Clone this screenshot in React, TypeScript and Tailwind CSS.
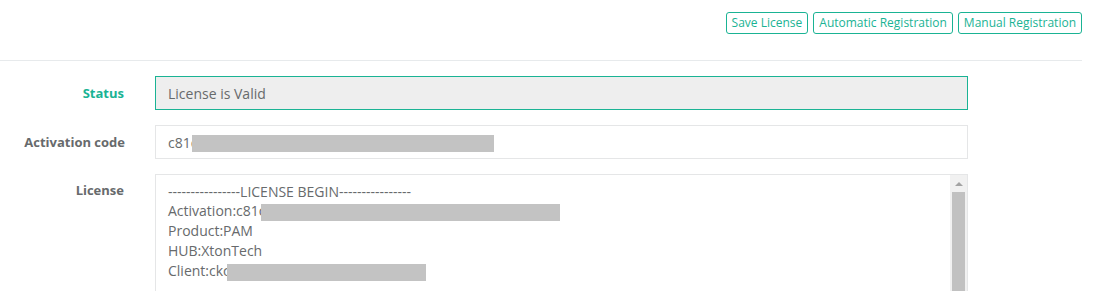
const font = { fontFamily: '"Open Sans", "Noto Sans", sans-serif' };

function Btn({ children }: { children: React.ReactNode }) {
  return (
    <button className="h-[22px] px-[5px] border border-[#1ab394] rounded-[3px] text-[12px] leading-none text-[#1ab394] bg-white">
      {children}
    </button>
  );
}

function Redact({ w }: { w: number }) {
  return <span className="inline-block h-[17px] bg-[#c3c3c3] align-middle" style={{ width: w }} />;
}

export default function App() {
  return (
    <div className="w-[1096px] h-[291px] bg-white overflow-hidden text-[#676a6c]" style={font}>
      <div className="flex justify-end gap-[5px] pt-[12px] pr-[14px]">
        <Btn>Save License</Btn>
        <Btn>Automatic Registration</Btn>
        <Btn>Manual Registration</Btn>
      </div>
      <div className="mt-[26px] mr-[14px] border-t border-[#e7eaec]" />

      <div className="pt-[15px] flex flex-col gap-[15px]">
        <div className="flex">
          <label className="w-[125px] pr-[1px] text-right text-[13px] font-bold text-[#1ab394] pt-[7px] leading-[20px]">Status</label>
          <div className="ml-[30px] w-[813px] h-[34px] border border-[#1ab394] bg-[#eeeeee] px-[12px] flex items-center text-[14px]">
            License is Valid
          </div>
        </div>

        <div className="flex">
          <label className="w-[125px] text-right text-[13px] font-bold pt-[7px] leading-[20px]">Activation code</label>
          <div className="ml-[30px] w-[813px] h-[34px] border border-[#e5e6e7] bg-white px-[12px] flex items-center text-[14px]">
            <span>c81c</span>
            <span className="-ml-[5px]"><Redact w={302} /></span>
          </div>
        </div>

        <div className="flex">
          <label className="w-[125px] pr-[1px] text-right text-[13px] font-bold pt-[6px] leading-[20px]">License</label>
          <div className="ml-[30px] w-[813px] h-[140px] border border-[#e5e6e7] bg-white flex">
            <div className="flex-1 px-[12px] pt-[7px] text-[14px] leading-[20px]">
              <div>----------------LICENSE BEGIN----------------</div>
              <div className="flex items-center -mt-[1px]">
                <span>Activation:c81c</span>
                <span className="-ml-[5px]"><Redact w={299} /></span>
              </div>
              <div>Product:PAM</div>
              <div>HUB:XtonTech</div>
              <div className="flex items-center">
                <span>Client:ckc</span>
                <span className="-ml-[3px]"><Redact w={199} /></span>
              </div>
            </div>
            <div className="w-[17px] bg-[#f1f1f1] flex flex-col items-center">
              <div className="h-[17px] flex items-center justify-center">
                <svg width="8" height="4" viewBox="0 0 8 4">
                  <path d="M0 4 L4 0 L8 4 Z" fill="#a3a3a3" />
                </svg>
              </div>
              <div className="w-[13px] flex-1 bg-[#c1c1c1]" />
            </div>
          </div>
        </div>
      </div>
    </div>
  );
}
